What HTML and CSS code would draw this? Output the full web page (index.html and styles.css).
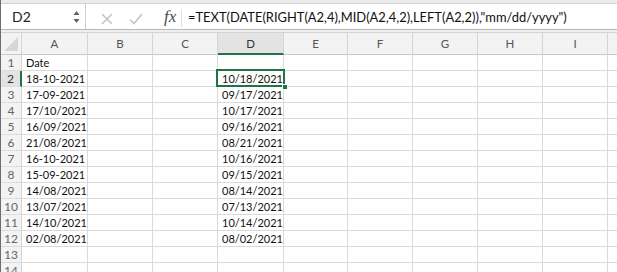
FILE: index.html
```html
<!DOCTYPE html>
<html>
<head>
<meta charset="utf-8">
<link rel="stylesheet" href="styles.css">
</head>
<body>
<div class="app">
  <div class="top-strip"></div>
  <div class="bar">
    <div class="namebox">
      <span class="name">D2</span>
      <span class="spin">
        <svg width="7" height="14" viewBox="0 0 7 14"><path d="M3.5 1 L6.5 5 L0.5 5 Z" fill="#606060"/><path d="M0.5 9 L6.5 9 L3.5 13 Z" fill="#606060"/></svg>
      </span>
    </div>
    <div class="icons">
      <svg class="ic-x" width="12" height="12" viewBox="0 0 12 12"><path d="M1 1 L11 11 M11 1 L1 11" stroke="#c4c4c4" stroke-width="1.6" fill="none"/></svg>
      <svg class="ic-check" width="14" height="12" viewBox="0 0 14 12"><path d="M1 6.5 L5 10.5 L13 1" stroke="#c4c4c4" stroke-width="1.6" fill="none"/></svg>
      <span class="fx">fx</span>
    </div>
    <div class="formula">=TEXT(DATE(RIGHT(A2,4),MID(A2,4,2),LEFT(A2,2)),"mm/dd/yyyy")</div>
  </div>
  <div class="gap"></div>
  <div class="sheet">
    <div class="row head">
      <div class="corner"></div>
      <div class="ch">A</div><div class="ch">B</div><div class="ch">C</div><div class="ch sel">D</div><div class="ch">E</div><div class="ch">F</div><div class="ch">G</div><div class="ch">H</div><div class="ch">I</div><div class="ch"></div>
    </div>
    <div class="row"><div class="rh">1</div><div class="c">Date</div><div class="c"></div><div class="c"></div><div class="c"></div><div class="c"></div><div class="c"></div><div class="c"></div><div class="c"></div><div class="c"></div><div class="c"></div></div>
    <div class="row"><div class="rh sel">2</div><div class="c">18-10-2021</div><div class="c"></div><div class="c"></div><div class="c active">10/18/2021<span class="handle"></span></div><div class="c"></div><div class="c"></div><div class="c"></div><div class="c"></div><div class="c"></div><div class="c"></div></div>
    <div class="row"><div class="rh">3</div><div class="c">17-09-2021</div><div class="c"></div><div class="c"></div><div class="c">09/17/2021</div><div class="c"></div><div class="c"></div><div class="c"></div><div class="c"></div><div class="c"></div><div class="c"></div></div>
    <div class="row"><div class="rh">4</div><div class="c">17/10/2021</div><div class="c"></div><div class="c"></div><div class="c">10/17/2021</div><div class="c"></div><div class="c"></div><div class="c"></div><div class="c"></div><div class="c"></div><div class="c"></div></div>
    <div class="row"><div class="rh">5</div><div class="c">16/09/2021</div><div class="c"></div><div class="c"></div><div class="c">09/16/2021</div><div class="c"></div><div class="c"></div><div class="c"></div><div class="c"></div><div class="c"></div><div class="c"></div></div>
    <div class="row"><div class="rh">6</div><div class="c">21/08/2021</div><div class="c"></div><div class="c"></div><div class="c">08/21/2021</div><div class="c"></div><div class="c"></div><div class="c"></div><div class="c"></div><div class="c"></div><div class="c"></div></div>
    <div class="row"><div class="rh">7</div><div class="c">16-10-2021</div><div class="c"></div><div class="c"></div><div class="c">10/16/2021</div><div class="c"></div><div class="c"></div><div class="c"></div><div class="c"></div><div class="c"></div><div class="c"></div></div>
    <div class="row"><div class="rh">8</div><div class="c">15-09-2021</div><div class="c"></div><div class="c"></div><div class="c">09/15/2021</div><div class="c"></div><div class="c"></div><div class="c"></div><div class="c"></div><div class="c"></div><div class="c"></div></div>
    <div class="row"><div class="rh">9</div><div class="c">14/08/2021</div><div class="c"></div><div class="c"></div><div class="c">08/14/2021</div><div class="c"></div><div class="c"></div><div class="c"></div><div class="c"></div><div class="c"></div><div class="c"></div></div>
    <div class="row"><div class="rh">10</div><div class="c">13/07/2021</div><div class="c"></div><div class="c"></div><div class="c">07/13/2021</div><div class="c"></div><div class="c"></div><div class="c"></div><div class="c"></div><div class="c"></div><div class="c"></div></div>
    <div class="row"><div class="rh">11</div><div class="c">14/10/2021</div><div class="c"></div><div class="c"></div><div class="c">10/14/2021</div><div class="c"></div><div class="c"></div><div class="c"></div><div class="c"></div><div class="c"></div><div class="c"></div></div>
    <div class="row"><div class="rh">12</div><div class="c">02/08/2021</div><div class="c"></div><div class="c"></div><div class="c">08/02/2021</div><div class="c"></div><div class="c"></div><div class="c"></div><div class="c"></div><div class="c"></div><div class="c"></div></div>
    <div class="row"><div class="rh">13</div><div class="c"></div><div class="c"></div><div class="c"></div><div class="c"></div><div class="c"></div><div class="c"></div><div class="c"></div><div class="c"></div><div class="c"></div><div class="c"></div></div>
    <div class="row"><div class="rh">14</div><div class="c"></div><div class="c"></div><div class="c"></div><div class="c"></div><div class="c"></div><div class="c"></div><div class="c"></div><div class="c"></div><div class="c"></div><div class="c"></div></div>
  </div>
</div>
</body>
</html>
```

FILE: styles.css
```css
* { box-sizing: border-box; }
html, body { margin: 0; padding: 0; }
body {
  width: 617px;
  height: 272px;
  overflow: hidden;
  background: #ffffff;
  font-family: Lato, "Open Sans", sans-serif;
  color: #111111;
}
.app {
  width: 617px;
  height: 272px;
  overflow: hidden;
  border-left: 1px solid #6b6f74;
}
.top-strip {
  height: 3px;
  background: #ebebeb;
}
.bar {
  height: 27px;
  display: flex;
  align-items: stretch;
  background: #ffffff;
  border-top: 1px solid #d2d2d2;
  border-bottom: 1px solid #b8b8b8;
}
.namebox {
  width: 85px;
  display: flex;
  align-items: center;
  justify-content: space-between;
  padding: 0 5px 0 11px;
  border-right: 1px solid #d0d0d0;
}
.name {
  font-size: 14px;
  color: #222;
}
.spin { display: flex; align-items: center; height: 14px; }
.spin svg { display: block; }
.icons {
  width: 96px;
  display: flex;
  align-items: center;
  padding-left: 15px;
  border-right: 1px solid #e0e0e0;
  margin: 6px 0 2px;
}
.ic-x { margin-right: 16px; }
.ic-check { margin-right: 21px; }
.fx {
  font-family: "Liberation Serif", serif;
  font-style: italic;
  font-size: 17px;
  color: #4a4a4a;
  margin-top: -4px;
}
.formula {
  display: flex;
  align-items: center;
  padding-left: 6px;
  font-size: 12.9px;
  color: #111;
  white-space: nowrap;
}
.gap {
  height: 2px;
  background: #efefef;
}
.sheet { display: flex; flex-direction: column; }
.row {
  display: grid;
  grid-template-columns: 21px 66px 65px 65px 66px 64px 65px 65px 65px 65px 30px;
  height: 16px;
}
.row.head {
  height: 23px;
  background: #f3f3f3;
  border-top: 1px solid #d4d4d4;
}
.corner {
  position: relative;
  border-right: 1px solid #d4d4d4;
  border-bottom: 1px solid #c9c9c9;
  background: #f3f3f3;
}
.corner::after {
  content: "";
  position: absolute;
  right: 3px;
  bottom: 3px;
  width: 0;
  height: 0;
  border-style: solid;
  border-width: 0 0 14px 14px;
  border-color: transparent transparent #d6d6d6 transparent;
}
.ch {
  font-size: 11.5px;
  color: #555;
  display: flex;
  align-items: center;
  justify-content: center;
  border-right: 1px solid #d4d4d4;
  border-bottom: 1px solid #c9c9c9;
}
.ch.sel {
  background: #e3e3e3;
  border-bottom: 2px solid #217346;
  color: #333;
}
.rh {
  font-size: 12px;
  color: #666;
  background: #f3f3f3;
  display: flex;
  align-items: center;
  justify-content: center;
  border-right: 1px solid #d4d4d4;
  border-bottom: 1px solid #dcdcdc;
}
.rh.sel {
  background: #e3e3e3;
  border-right: 2px solid #217346;
  color: #333;
}
.c {
  position: relative;
  font-size: 11px;
  line-height: 15px;
  padding-left: 4px;
  white-space: nowrap;
  border-right: 1px solid #dadada;
  border-bottom: 1px solid #dadada;
}
.c.active::after {
  content: "";
  position: absolute;
  left: -2px;
  top: -2px;
  right: -2px;
  bottom: -1px;
  border: 2px solid #217346;
}
.handle {
  position: absolute;
  right: -5px;
  bottom: -4px;
  width: 6px;
  height: 6px;
  background: #217346;
  border: 1px solid #ffffff;
  z-index: 2;
}
```
